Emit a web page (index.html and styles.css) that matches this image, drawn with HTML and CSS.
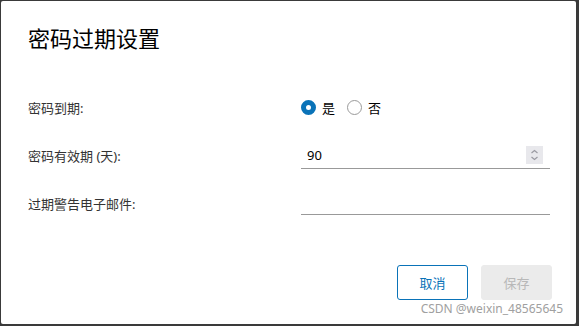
FILE: index.html
```html
<!DOCTYPE html>
<html lang="zh">
<head>
    <meta charset="UTF-8">
    <meta name="viewport" content="width=device-width, initial-scale=1.0">
    <title>密码过期设置</title>
    <link rel="stylesheet" href="styles.css">
</head>
<body>
    <div class="dialog">
        <h1 class="title">密码过期设置</h1>
        <div class="form">
            <div class="form-row">
                <label class="label">密码到期:</label>
                <div class="radios">
                    <span class="radio checked"></span>
                    <span class="radio-text">是</span>
                    <span class="radio"></span>
                    <span class="radio-text">否</span>
                </div>
            </div>
            <div class="form-row">
                <label class="label" for="days">密码有效期 (天):</label>
                <div class="field">
                    <span class="field-value" id="days">90</span>
                    <span class="spinner">
                        <svg width="17" height="18" viewBox="0 0 17 18">
                            <path d="M5.5 7 L8.5 4.5 L11.5 7" fill="none" stroke="#9a9aa2" stroke-width="1.2"/>
                            <path d="M5.5 11 L8.5 13.5 L11.5 11" fill="none" stroke="#9a9aa2" stroke-width="1.2"/>
                        </svg>
                    </span>
                </div>
            </div>
            <div class="form-row">
                <label class="label" for="email">过期警告电子邮件:</label>
                <div class="field field-low">
                    <span class="field-value" id="email"></span>
                </div>
            </div>
        </div>
        <div class="footer">
            <button class="btn btn-cancel">取消</button>
            <button class="btn btn-save" disabled>保存</button>
        </div>
        <div class="watermark">CSDN @weixin_48565645</div>
    </div>
</body>
</html>
```

FILE: styles.css
```css
body {
    margin: 0;
    background-color: #3a3a3a;
    font-family: "Noto Sans", "Noto Sans CJK SC", sans-serif;
}
.dialog {
    position: relative;
    box-sizing: border-box;
    width: 575px;
    height: 323px;
    margin: 1px 3px 2px 1px;
    padding: 0 24px 0 27px;
    background-color: #fff;
    border-radius: 2px;
}
.title {
    margin: 0;
    padding-top: 21px;
    height: 82px;
    box-sizing: border-box;
    font-size: 22px;
    font-weight: normal;
    line-height: 32px;
    color: #000;
}
.form-row {
    display: grid;
    grid-template-columns: 273px 249px;
    height: 48px;
    align-items: center;
}
.label {
    font-size: 13px;
    color: #333;
}
.radios {
    display: flex;
    align-items: center;
    font-size: 13px;
    color: #000;
}
.radio {
    box-sizing: border-box;
    width: 15px;
    height: 15px;
    border-radius: 50%;
    border: 1px solid #9a9a9a;
    background-color: #fff;
}
.radio.checked {
    border: 5px solid #0a73b8;
}
.radio-text {
    margin: 0 12px 0 6px;
}
.field {
    display: flex;
    align-items: center;
    justify-content: space-between;
    height: 26px;
    border-bottom: 1px solid #999;
    margin-top: 1px;
}
.field-low {
    margin-top: -3px;
}
.field-value {
    padding-left: 6px;
    font-size: 13px;
    color: #000;
}
.spinner {
    display: flex;
    width: 17px;
    height: 18px;
    margin-right: 7px;
    background-color: #e8e8ec;
}
.footer {
    display: flex;
    justify-content: flex-end;
    gap: 13px;
    margin-top: 38px;
}
.btn {
    width: 71px;
    height: 35px;
    font-family: "Noto Sans CJK SC", sans-serif;
    font-size: 13px;
    border-radius: 3px;
    cursor: pointer;
}
.btn-cancel {
    background-color: #fff;
    color: #0a73b8;
    border: 1px solid #0a73b8;
}
.btn-save {
    background-color: #ebebeb;
    color: #b8b8b8;
    border: 1px solid #ebebeb;
}
.watermark {
    position: absolute;
    right: 13px;
    bottom: 7px;
    font-size: 12px;
    color: #a0a0a0;
}
```
